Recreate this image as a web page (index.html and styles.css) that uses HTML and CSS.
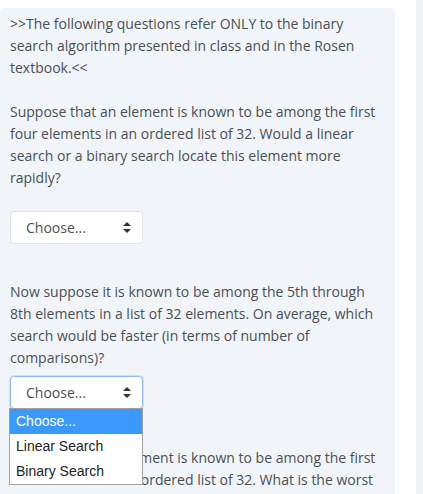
FILE: index.html
```html
<!DOCTYPE html>
<html>
<head>
<meta charset="utf-8">
<link rel="stylesheet" href="styles.css">
</head>
<body>
<div class="page">
  <div class="formulation">
    <p class="para">&gt;&gt;The following questions refer ONLY to the binary search algorithm presented in class and in the Rosen textbook.&lt;&lt;</p>
    <p class="para">Suppose that an element is known to be among the first four elements in an ordered list of 32. Would a linear search or a binary search locate this element more rapidly?</p>
    <div class="select-row first">
      <div class="select">
        <span class="select-text">Choose...</span>
        <svg class="arrows" width="8" height="11" viewBox="0 0 8 11"><path d="M4 0 L8 4 H0 Z M0 7 H8 L4 11 Z" fill="#333"/></svg>
      </div>
    </div>
    <p class="para second">Now suppose it is known to be among the 5th through 8th elements in a list of 32 elements. On average, which search would be faster (in terms of number of comparisons)?</p>
    <div class="select-row open">
      <div class="select focused">
        <span class="select-text">Choose...</span>
        <svg class="arrows" width="8" height="11" viewBox="0 0 8 11"><path d="M4 0 L8 4 H0 Z M0 7 H8 L4 11 Z" fill="#333"/></svg>
      </div>
      <ul class="dropdown">
        <li class="option selected">Choose...</li>
        <li class="option">Linear Search</li>
        <li class="option">Binary Search</li>
      </ul>
    </div>
    <p class="para third">Suppose that an element is known to be among the first four elements in an ordered list of 32. What is the worst case number of comparisons for a binary search?</p>
  </div>
  <div class="gutter"></div>
  <div class="scrollbar"></div>
</div>
</body>
</html>
```

FILE: styles.css
```css
html, body {
  margin: 0;
  padding: 0;
  background: #ffffff;
  height: 100%;
  overflow: hidden;
}
.page {
  display: flex;
  height: 494px;
  padding-top: 8px;
  box-sizing: border-box;
  overflow: hidden;
}
.formulation {
  width: 395px;
  flex: none;
  background: #f1f5f9;
  border-radius: 4px 4px 0 0;
  padding: 5px 10px 0 10px;
  box-sizing: border-box;
  font-family: "Open Sans", sans-serif;
  font-size: 14px;
  line-height: 22px;
  color: #4a4f55;
  overflow: hidden;
}
.gutter {
  flex: 1;
}
.scrollbar {
  width: 7px;
  flex: none;
  background: #eff1f3;
  margin-top: -8px;
}
.para {
  margin: 0 0 22px 0;
}
.select-row {
  position: relative;
  margin-bottom: 37px;
}
.select-row.open {
  margin-bottom: 0;
}
.para.second {
  margin-bottom: 7px;
}
.para.third {
  margin-top: 38px;
}
.select {
  width: 133px;
  height: 33px;
  box-sizing: border-box;
  background: #ffffff;
  border: 1px solid #dee2e6;
  border-radius: 4px;
  display: flex;
  align-items: center;
  justify-content: space-between;
  padding: 0 11px 0 15px;
  color: #495057;
}
.select.focused {
  border-color: #8fbbf3;
  box-shadow: 0 0 0 1px rgba(143, 187, 243, 0.35);
}
.arrows {
  display: block;
}
.dropdown {
  position: absolute;
  left: -1px;
  top: 32px;
  width: 134px;
  box-sizing: border-box;
  margin: 0;
  padding: 0;
  list-style: none;
  background: #ffffff;
  border: 1px solid #a0a0a0;
  font-family: "Liberation Sans", Arial, sans-serif;
  font-size: 14px;
  color: #222;
  z-index: 2;
}
.option {
  height: 25px;
  line-height: 25px;
  padding-left: 6px;
}
.option.selected {
  background: #3b99fc;
  color: #ffffff;
}
```
